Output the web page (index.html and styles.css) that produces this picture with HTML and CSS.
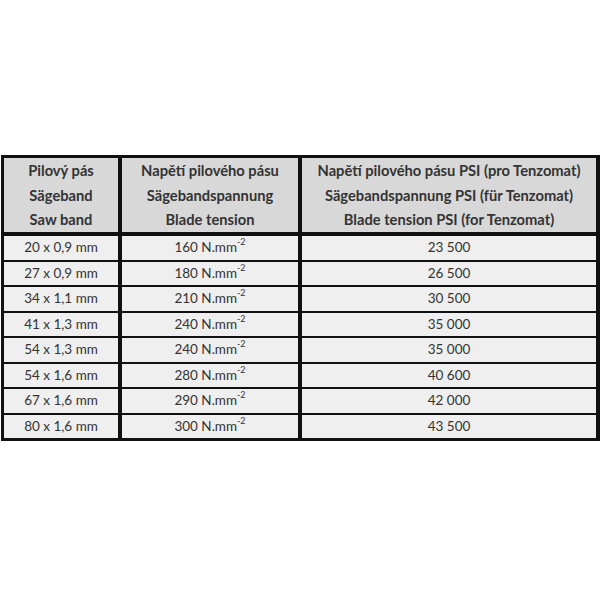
FILE: index.html
```html
<!DOCTYPE html>
<html>
<head>
<meta charset="utf-8">
<link rel="stylesheet" href="styles.css">
</head>
<body>
<div class="sheet">
  <div class="grid">
    <div class="cell head">Pilový pás<br>Sägeband<br>Saw band</div>
    <div class="cell head">Napětí pilového pásu<br>Sägebandspannung<br>Blade tension</div>
    <div class="cell head">Napětí pilového pásu PSI (pro Tenzomat)<br>Sägebandspannung PSI (für Tenzomat)<br>Blade tension PSI (for Tenzomat)</div>

    <div class="cell">20 x 0,9 mm</div><div class="cell">160 N.mm<sup>-2</sup></div><div class="cell">23 500</div>
    <div class="cell">27 x 0,9 mm</div><div class="cell">180 N.mm<sup>-2</sup></div><div class="cell">26 500</div>
    <div class="cell">34 x 1,1 mm</div><div class="cell">210 N.mm<sup>-2</sup></div><div class="cell">30 500</div>
    <div class="cell">41 x 1,3 mm</div><div class="cell">240 N.mm<sup>-2</sup></div><div class="cell">35 000</div>
    <div class="cell">54 x 1,3 mm</div><div class="cell">240 N.mm<sup>-2</sup></div><div class="cell">35 000</div>
    <div class="cell">54 x 1,6 mm</div><div class="cell">280 N.mm<sup>-2</sup></div><div class="cell">40 600</div>
    <div class="cell">67 x 1,6 mm</div><div class="cell">290 N.mm<sup>-2</sup></div><div class="cell">42 000</div>
    <div class="cell">80 x 1,6 mm</div><div class="cell">300 N.mm<sup>-2</sup></div><div class="cell">43 500</div>
  </div>
</div>
</body>
</html>
```

FILE: styles.css
```css
html, body {
  margin: 0;
  padding: 0;
  background: #ffffff;
}
.sheet {
  padding-top: 155px;
  padding-left: 1px;
}
.grid {
  display: grid;
  grid-template-columns: 114px 176px 294px;
  grid-template-rows: 76px;
  grid-auto-rows: 23.5px;
  column-gap: 4px;
  row-gap: 2px;
  width: 596px;
  padding: 3px 3px 3px 3px;
  background: #111111;
  font-family: Lato, "Open Sans", sans-serif;
  color: #333333;
  font-size: 13.5px;
}
.cell {
  background: #efefef;
  text-align: center;
  line-height: 23.5px;
  white-space: nowrap;
}
.head {
  background: #d8d8d8;
  height: 74px;
  line-height: 24.7px;
  font-size: 14.7px;
  font-weight: 700;
  align-self: start;
}
sup {
  font-size: 9px;
  line-height: 0;
  vertical-align: 7px;
}
```
